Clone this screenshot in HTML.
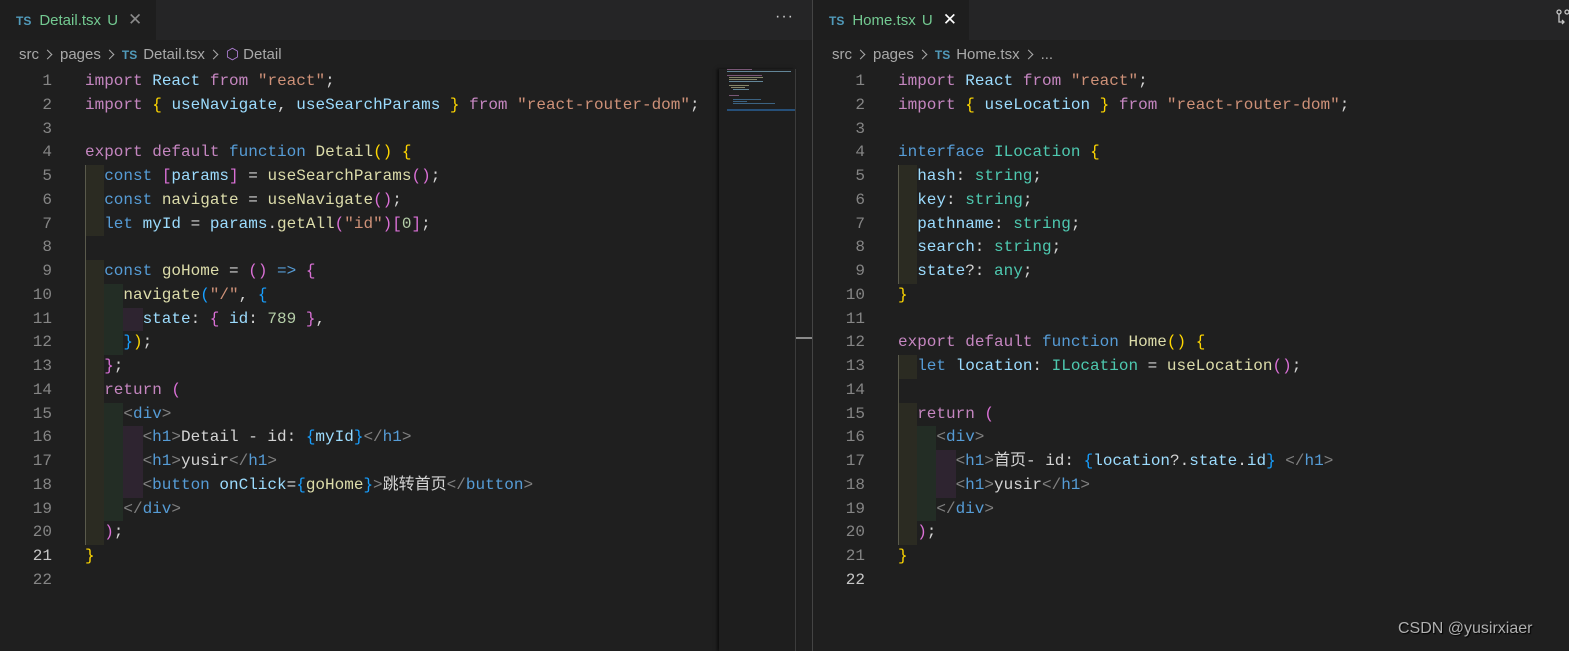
<!DOCTYPE html>
<html><head><meta charset="utf-8"><style>
*{margin:0;padding:0;box-sizing:border-box}
body{width:1569px;height:651px;background:#1f1f1f;position:relative;overflow:hidden;font-family:"Liberation Sans","Noto Sans CJK SC",sans-serif}
.tabbar{position:absolute;top:0;height:40px;background:#252526}
.tab{position:absolute;top:0;height:40px;background:#1e1e1e;color:#73c991;font-size:15px;line-height:40px}
.ts{color:#519aba;font-weight:bold;font-size:12px;margin-right:8px}
.crumb{position:absolute;top:44px;height:22px;color:#a9a9a9;font-size:15px;line-height:22px;white-space:nowrap}
.crumb .ts{font-size:12px;margin-right:6px}
.sep{display:inline-block;width:7px;height:7px;border-right:1.3px solid #a9a9a9;border-top:1.3px solid #a9a9a9;transform:rotate(45deg);margin:0 9px 1px 5px}
.code{position:absolute;font-family:"Liberation Mono","Noto Sans CJK SC",monospace;font-size:16px;white-space:pre;color:#d4d4d4}
.l{position:absolute;left:0;height:23.75px;line-height:23.75px}
.n{position:absolute;width:40px;text-align:right;height:23.75px;line-height:23.75px;color:#858585}
.n.c{color:#c6c6c6}
.g{display:inline-block;width:19.2px;height:23.75px;vertical-align:top}
.g1{background:#2b2b22;border-left:1px solid #5a5a4c}
.g2{background:#232d25}
.g3{background:#2e2430}
.k{color:#c586c0}.b{color:#569cd6}.v{color:#9cdcfe}.f{color:#dcdcaa}.s{color:#ce9178}.t{color:#4ec9b0}.num{color:#b5cea8}
.y{color:#ffd700}.p{color:#da70d6}.bl{color:#179fff}.gr{color:#808080}
.mm{position:absolute;height:1px;opacity:.55}
</style></head><body>
<!-- left pane -->
<div class="tabbar" style="left:0;width:812px"></div>
<div class="tab" style="left:0;width:156px;padding-left:16px"><span class="ts">TS</span>Detail.tsx <span style="margin-left:2px">U</span><span style="color:#8a8a8a;margin-left:10px;font-size:17px">✕</span></div>
<div style="position:absolute;left:775px;top:8px;color:#ccc;font-size:16px;letter-spacing:1px">···</div>
<div class="crumb" style="left:19px">src<span class="sep"></span>pages<span class="sep"></span><span class="ts">TS</span>Detail.tsx<span class="sep"></span><span style="color:#b180d7">⬡</span> Detail</div>

<div style="position:absolute;left:719px;top:69px;width:76px;height:582px;background:#1e1e1e;box-shadow:-2px 0 3px rgba(0,0,0,.6)"></div>
<div class="mm" style="left:727px;top:69px;width:25px;background:#c586c0"></div>
<div class="mm" style="left:727px;top:71px;width:64px;background:#9cdcfe"></div>
<div class="mm" style="left:727px;top:75px;width:35px;background:#c586c0"></div>
<div class="mm" style="left:729px;top:77px;width:34px;background:#dcdcaa"></div>
<div class="mm" style="left:729px;top:79px;width:28px;background:#dcdcaa"></div>
<div class="mm" style="left:729px;top:81px;width:34px;background:#9cdcfe"></div>
<div class="mm" style="left:729px;top:85px;width:20px;background:#dcdcaa"></div>
<div class="mm" style="left:731px;top:87px;width:14px;background:#dcdcaa"></div>
<div class="mm" style="left:733px;top:89px;width:16px;background:#9cdcfe"></div>
<div class="mm" style="left:729px;top:95px;width:10px;background:#c586c0"></div>
<div class="mm" style="left:733px;top:99px;width:28px;background:#569cd6"></div>
<div class="mm" style="left:733px;top:101px;width:14px;background:#569cd6"></div>
<div class="mm" style="left:733px;top:103px;width:42px;background:#569cd6"></div>
<div style="position:absolute;left:727px;top:109px;width:68px;height:2px;background:#264f78"></div>
<div style="position:absolute;left:795px;top:69px;width:1px;height:582px;background:#3c3c3c"></div>
<div style="position:absolute;left:796px;top:337px;width:17px;height:2px;background:#8a8a8a"></div>
<div style="position:absolute;left:812px;top:0;width:1px;height:651px;background:#444"></div>

<div class="code" style="left:0;top:70px">
<div class="n" style="top:0;left:12px">1</div><div class="n" style="top:23.75px;left:12px">2</div><div class="n" style="top:47.5px;left:12px">3</div><div class="n" style="top:71.25px;left:12px">4</div><div class="n" style="top:95px;left:12px">5</div><div class="n" style="top:118.75px;left:12px">6</div><div class="n" style="top:142.5px;left:12px">7</div><div class="n" style="top:166.25px;left:12px">8</div><div class="n" style="top:190px;left:12px">9</div><div class="n" style="top:213.75px;left:12px">10</div><div class="n" style="top:237.5px;left:12px">11</div><div class="n" style="top:261.25px;left:12px">12</div><div class="n" style="top:285px;left:12px">13</div><div class="n" style="top:308.75px;left:12px">14</div><div class="n" style="top:332.5px;left:12px">15</div><div class="n" style="top:356.25px;left:12px">16</div><div class="n" style="top:380px;left:12px">17</div><div class="n" style="top:403.75px;left:12px">18</div><div class="n" style="top:427.5px;left:12px">19</div><div class="n" style="top:451.25px;left:12px">20</div><div class="n c" style="top:475px;left:12px">21</div><div class="n" style="top:498.75px;left:12px">22</div>
<div style="position:absolute;left:85px;top:0">
<div class="l" style="top:0"><span class="k">import</span> <span class="v">React</span> <span class="k">from</span> <span class="s">"react"</span>;</div>
<div class="l" style="top:23.75px"><span class="k">import</span> <span class="y">{</span> <span class="v">useNavigate</span>, <span class="v">useSearchParams</span> <span class="y">}</span> <span class="k">from</span> <span class="s">"react-router-dom"</span>;</div>
<div class="l" style="top:71.25px"><span class="k">export</span> <span class="k">default</span> <span class="b">function</span> <span class="f">Detail</span><span class="y">()</span> <span class="y">{</span></div>
<div class="l" style="top:95px"><span class="g g1"></span><span class="b">const</span> <span class="p">[</span><span class="v">params</span><span class="p">]</span> = <span class="f">useSearchParams</span><span class="p">()</span>;</div>
<div class="l" style="top:118.75px"><span class="g g1"></span><span class="b">const</span> <span class="f">navigate</span> = <span class="f">useNavigate</span><span class="p">()</span>;</div>
<div class="l" style="top:142.5px"><span class="g g1"></span><span class="b">let</span> <span class="v">myId</span> = <span class="v">params</span>.<span class="f">getAll</span><span class="p">(</span><span class="s">"id"</span><span class="p">)[</span><span class="num">0</span><span class="p">]</span>;</div>
<div class="l" style="top:166.25px"><span class="g" style="border-left:1px solid #5a5a4c"></span></div>
<div class="l" style="top:190px"><span class="g g1"></span><span class="b">const</span> <span class="f">goHome</span> = <span class="p">()</span> <span class="b">=&gt;</span> <span class="p">{</span></div>
<div class="l" style="top:213.75px"><span class="g g1"></span><span class="g g2"></span><span class="f">navigate</span><span class="bl">(</span><span class="s">"/"</span>, <span class="bl">{</span></div>
<div class="l" style="top:237.5px"><span class="g g1"></span><span class="g g2"></span><span class="g g3"></span><span class="v">state</span>: <span class="p">{</span> <span class="v">id</span>: <span class="num">789</span> <span class="p">}</span>,</div>
<div class="l" style="top:261.25px"><span class="g g1"></span><span class="g g2"></span><span class="bl">}</span><span class="y">)</span>;</div>
<div class="l" style="top:285px"><span class="g g1"></span><span class="p">}</span>;</div>
<div class="l" style="top:308.75px"><span class="g g1"></span><span class="k">return</span> <span class="p">(</span></div>
<div class="l" style="top:332.5px"><span class="g g1"></span><span class="g g2"></span><span class="gr">&lt;</span><span class="b">div</span><span class="gr">&gt;</span></div>
<div class="l" style="top:356.25px"><span class="g g1"></span><span class="g g2"></span><span class="g g3"></span><span class="gr">&lt;</span><span class="b">h1</span><span class="gr">&gt;</span>Detail - id: <span class="bl">{</span><span class="v">myId</span><span class="bl">}</span><span class="gr">&lt;/</span><span class="b">h1</span><span class="gr">&gt;</span></div>
<div class="l" style="top:380px"><span class="g g1"></span><span class="g g2"></span><span class="g g3"></span><span class="gr">&lt;</span><span class="b">h1</span><span class="gr">&gt;</span>yusir<span class="gr">&lt;/</span><span class="b">h1</span><span class="gr">&gt;</span></div>
<div class="l" style="top:403.75px"><span class="g g1"></span><span class="g g2"></span><span class="g g3"></span><span class="gr">&lt;</span><span class="b">button</span> <span class="v">onClick</span>=<span class="bl">{</span><span class="f">goHome</span><span class="bl">}</span><span class="gr">&gt;</span>跳转首页<span class="gr">&lt;/</span><span class="b">button</span><span class="gr">&gt;</span></div>
<div class="l" style="top:427.5px"><span class="g g1"></span><span class="g g2"></span><span class="gr">&lt;/</span><span class="b">div</span><span class="gr">&gt;</span></div>
<div class="l" style="top:451.25px"><span class="g g1"></span><span class="p">)</span>;</div>
<div class="l" style="top:475px"><span class="y">}</span></div>
</div></div>

<!-- right pane -->
<div class="tabbar" style="left:813px;width:756px"></div>
<div class="tab" style="left:813px;width:156px;padding-left:16px"><span class="ts">TS</span>Home.tsx <span style="margin-left:2px">U</span><span style="color:#fff;margin-left:10px;font-size:17px">✕</span></div>
<svg style="position:absolute;left:1556px;top:8px" width="14" height="22" viewBox="0 0 14 22" fill="none" stroke="#c5c5c5" stroke-width="1.3"><circle cx="3" cy="4" r="2"/><path d="M3 6v8h5M6 12l2 2-2 2"/><circle cx="11" cy="4" r="2"/></svg>
<div class="crumb" style="left:832px">src<span class="sep"></span>pages<span class="sep"></span><span class="ts">TS</span>Home.tsx<span class="sep"></span>...</div>

<div class="code" style="left:813px;top:70px">
<div class="n" style="top:0;left:12px">1</div><div class="n" style="top:23.75px;left:12px">2</div><div class="n" style="top:47.5px;left:12px">3</div><div class="n" style="top:71.25px;left:12px">4</div><div class="n" style="top:95px;left:12px">5</div><div class="n" style="top:118.75px;left:12px">6</div><div class="n" style="top:142.5px;left:12px">7</div><div class="n" style="top:166.25px;left:12px">8</div><div class="n" style="top:190px;left:12px">9</div><div class="n" style="top:213.75px;left:12px">10</div><div class="n" style="top:237.5px;left:12px">11</div><div class="n" style="top:261.25px;left:12px">12</div><div class="n" style="top:285px;left:12px">13</div><div class="n" style="top:308.75px;left:12px">14</div><div class="n" style="top:332.5px;left:12px">15</div><div class="n" style="top:356.25px;left:12px">16</div><div class="n" style="top:380px;left:12px">17</div><div class="n" style="top:403.75px;left:12px">18</div><div class="n" style="top:427.5px;left:12px">19</div><div class="n" style="top:451.25px;left:12px">20</div><div class="n" style="top:475px;left:12px">21</div><div class="n c" style="top:498.75px;left:12px">22</div>
<div style="position:absolute;left:85px;top:0">
<div class="l" style="top:0"><span class="k">import</span> <span class="v">React</span> <span class="k">from</span> <span class="s">"react"</span>;</div>
<div class="l" style="top:23.75px"><span class="k">import</span> <span class="y">{</span> <span class="v">useLocation</span> <span class="y">}</span> <span class="k">from</span> <span class="s">"react-router-dom"</span>;</div>
<div class="l" style="top:71.25px"><span class="b">interface</span> <span class="t">ILocation</span> <span class="y">{</span></div>
<div class="l" style="top:95px"><span class="g g1"></span><span class="v">hash</span>: <span class="t">string</span>;</div>
<div class="l" style="top:118.75px"><span class="g g1"></span><span class="v">key</span>: <span class="t">string</span>;</div>
<div class="l" style="top:142.5px"><span class="g g1"></span><span class="v">pathname</span>: <span class="t">string</span>;</div>
<div class="l" style="top:166.25px"><span class="g g1"></span><span class="v">search</span>: <span class="t">string</span>;</div>
<div class="l" style="top:190px"><span class="g g1"></span><span class="v">state</span>?: <span class="t">any</span>;</div>
<div class="l" style="top:213.75px"><span class="y">}</span></div>
<div class="l" style="top:261.25px"><span class="k">export</span> <span class="k">default</span> <span class="b">function</span> <span class="f">Home</span><span class="y">()</span> <span class="y">{</span></div>
<div class="l" style="top:285px"><span class="g g1"></span><span class="b">let</span> <span class="v">location</span>: <span class="t">ILocation</span> = <span class="f">useLocation</span><span class="p">()</span>;</div>
<div class="l" style="top:308.75px"><span class="g" style="border-left:1px solid #5a5a4c"></span></div>
<div class="l" style="top:332.5px"><span class="g g1"></span><span class="k">return</span> <span class="p">(</span></div>
<div class="l" style="top:356.25px"><span class="g g1"></span><span class="g g2"></span><span class="gr">&lt;</span><span class="b">div</span><span class="gr">&gt;</span></div>
<div class="l" style="top:380px"><span class="g g1"></span><span class="g g2"></span><span class="g g3"></span><span class="gr">&lt;</span><span class="b">h1</span><span class="gr">&gt;</span>首页- id: <span class="bl">{</span><span class="v">location</span>?.<span class="v">state</span>.<span class="v">id</span><span class="bl">}</span> <span class="gr">&lt;/</span><span class="b">h1</span><span class="gr">&gt;</span></div>
<div class="l" style="top:403.75px"><span class="g g1"></span><span class="g g2"></span><span class="g g3"></span><span class="gr">&lt;</span><span class="b">h1</span><span class="gr">&gt;</span>yusir<span class="gr">&lt;/</span><span class="b">h1</span><span class="gr">&gt;</span></div>
<div class="l" style="top:427.5px"><span class="g g1"></span><span class="g g2"></span><span class="gr">&lt;/</span><span class="b">div</span><span class="gr">&gt;</span></div>
<div class="l" style="top:451.25px"><span class="g g1"></span><span class="p">)</span>;</div>
<div class="l" style="top:475px"><span class="y">}</span></div>
</div></div>

<div style="position:absolute;left:1398px;top:620px;color:#b0b0b0;font-size:16px;text-shadow:1px 1px 1px #000">CSDN @yusirxiaer</div>
</body></html>
